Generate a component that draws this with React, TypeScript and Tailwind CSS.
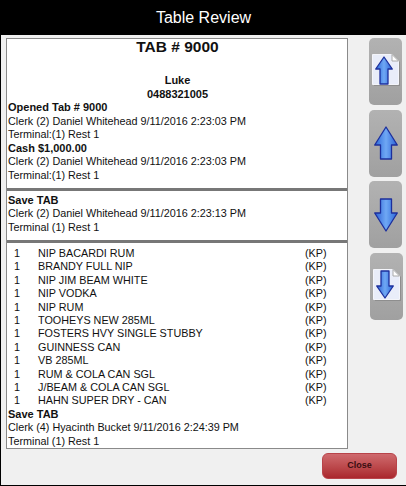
import React from 'react';

const ITEMS = [
  'NIP BACARDI RUM',
  'BRANDY FULL NIP',
  'NIP JIM BEAM WHITE',
  'NIP VODKA',
  'NIP RUM',
  'TOOHEYS NEW 285ML',
  'FOSTERS HVY SINGLE STUBBY',
  'GUINNESS CAN',
  'VB 285ML',
  'RUM & COLA CAN SGL',
  'J/BEAM & COLA CAN SGL',
  'HAHN SUPER DRY - CAN',
];

function Arrow({ down = false, small = false }: { down?: boolean; small?: boolean }) {
  const id = `${down ? 'd' : 'u'}${small ? 's' : 'l'}`;
  return (
    <svg
      width={small ? 18 : 24}
      height={small ? 29 : 34}
      viewBox={small ? '0 0 18 29' : '0 0 24 34'}
      className={down ? 'rotate-180' : ''}
    >
      <defs>
        <linearGradient id={id} x1="0" y1="0" x2="1" y2="0">
          <stop offset="0" stopColor="#2a66d8" />
          <stop offset="0.5" stopColor="#6fa8f4" />
          <stop offset="1" stopColor="#2a5fd4" />
        </linearGradient>
      </defs>
      <path
        d={small ? 'M9 1 L17.3 13 H13 V28 H5 V13 H0.7 Z' : 'M12 1 L23.3 19 H17.5 V33 H6.5 V19 H0.7 Z'}
        fill={`url(#${id})`}
        stroke="#1d2f9c"
        strokeWidth="1.3"
        strokeLinejoin="round"
      />
    </svg>
  );
}

function PageIcon({ down = false }: { down?: boolean }) {
  return (
    <div className="relative mb-[3px] flex h-[32px] w-[28px] items-center pl-[3px]">
      <svg width="28" height="32" viewBox="0 0 28 32" className="absolute inset-0">
        <path d="M2 2 H22 L28 8 V32 H2 Z" fill="#8e8e8e" />
        <path d="M0.5 0.5 H20 L26.5 7 V30.5 H0.5 Z" fill="#e9edf9" stroke="#f4f5fa" />
        <path d="M20 0.5 V7 H26.5 Z" fill="#ffffff" stroke="#a9a9a9" />
      </svg>
      <div className="relative flex">
        <Arrow down={down} small />
      </div>
    </div>
  );
}

function ScrollButton({ className = '', children }: { className?: string; children: React.ReactNode }) {
  return (
    <button
      className={`flex h-[67px] w-[33px] items-center justify-center rounded-[5px] bg-gradient-to-b from-[#b2b2b2] to-[#a0a0a0] ${className}`}
    >
      {children}
    </button>
  );
}

export default function App() {
  return (
    <div className="flex h-[486px] w-[406px] flex-col overflow-hidden border-b border-l border-black bg-[#f0f0f0] font-['Liberation_Sans',sans-serif] text-[10.8px] leading-[13.5px] text-[#111]">
      <div className="flex h-[35px] items-center justify-center bg-black text-[16px] text-white">
        Table Review
      </div>
      <div className="flex items-start pl-[5px] pt-[3px]">
        <div className="flex h-[411px] w-[342px] flex-col border border-[#8a8a8a] bg-white">
          <div className="h-[152px] border-b-[3px] border-[#777777] pl-[1px]">
            <div className="text-center text-[15.5px] leading-[15px] font-bold">TAB # 9000</div>
            <div className="mt-[20px] text-center text-[11px] font-bold">Luke</div>
            <div className="text-center text-[11px] font-bold">0488321005</div>
            <div className="text-[11px] font-bold">Opened Tab # 9000</div>
            <div>Clerk (2) Daniel Whitehead 9/11/2016 2:23:03 PM</div>
            <div>Terminal:(1) Rest 1</div>
            <div className="text-[11px] font-bold">Cash $1,000.00</div>
            <div>Clerk (2) Daniel Whitehead 9/11/2016 2:23:03 PM</div>
            <div>Terminal:(1) Rest 1</div>
          </div>
          <div className="h-[52px] border-b-[3px] border-[#777777] pl-[1px] pt-[3px]">
            <div className="text-[11px] font-bold">Save TAB</div>
            <div>Clerk (2) Daniel Whitehead 9/11/2016 2:23:13 PM</div>
            <div>Terminal (1) Rest 1</div>
          </div>
          <div className="flex-1 pl-[1px] pt-[4px] leading-[13.4px]">
            {ITEMS.map((item) => (
              <div key={item} className="flex">
                <span className="w-[30px] pl-[6px]">1</span>
                <span className="w-[267px]">{item}</span>
                <span>(KP)</span>
              </div>
            ))}
            <div className="text-[11px] font-bold">Save TAB</div>
            <div>Clerk (4) Hyacinth Bucket 9/11/2016 2:24:39 PM</div>
            <div>Terminal (1) Rest 1</div>
          </div>
        </div>
        <div className="ml-[21px] flex flex-col gap-[4.5px]">
          <ScrollButton>
            <PageIcon />
          </ScrollButton>
          <ScrollButton>
            <Arrow />
          </ScrollButton>
          <ScrollButton>
            <Arrow down />
          </ScrollButton>
          <ScrollButton className="ml-[1px]">
            <PageIcon down />
          </ScrollButton>
        </div>
      </div>
      <div className="mt-[4px] flex justify-end pr-[9px]">
        <button className="h-[26px] w-[75px] rounded-[6px] border border-[#b8444a] bg-gradient-to-b from-[#cf6a6e] to-[#aa262d] text-[9px] font-bold text-[#3a0d10]">
          Close
        </button>
      </div>
    </div>
  );
}
